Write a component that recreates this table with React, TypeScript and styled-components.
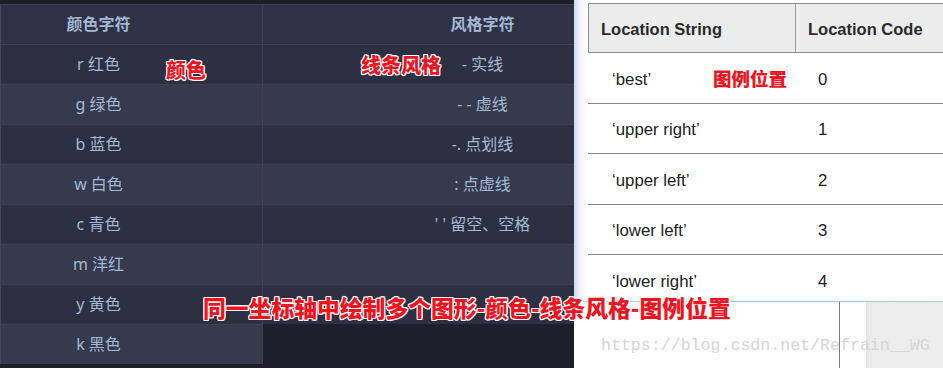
import styled, { createGlobalStyle } from 'styled-components';

const GlobalStyle = createGlobalStyle`
  body {
    margin: 0;
    background: #ffffff;
    overflow: hidden;
  }
`;

const colorRows: [string, string | null][] = [
  ['r 红色', '- 实线'],
  ['g 绿色', '- - 虚线'],
  ['b 蓝色', '-. 点划线'],
  ['w 白色', ': 点虚线'],
  ['c 青色', "' ' 留空、空格"],
  ['m 洋红', ''],
  ['y 黄色', ''],
  ['k 黑色', null],
];

const locRows = [
  ['‘best’', '0'],
  ['‘upper right’', '1'],
  ['‘upper left’', '2'],
  ['‘lower left’', '3'],
  ['‘lower right’', '4'],
];

const App = () => {
  return (
    <Page>
      <GlobalStyle />
      <DarkPanel>
        <DarkRow>
          <KeyCell $shade='head' $bold>颜色字符</KeyCell>
          <StyleCell $shade='head' $bold>风格字符</StyleCell>
        </DarkRow>
        {colorRows.map(([key, style], i) => (
          <DarkRow key={key}>
            <KeyCell $shade={i % 2 === 0 ? 'dark' : 'light'}>{key}</KeyCell>
            {style !== null && (
              <StyleCell $shade={i % 2 === 0 ? 'dark' : 'light'}>{style}</StyleCell>
            )}
          </DarkRow>
        ))}
      </DarkPanel>

      <LightSide>
        <TopArea>
          <WindowEdge />
          <LocTable>
            <LocHead>
              <LocHeadCell $first>Location String</LocHeadCell>
              <LocHeadCell>Location Code</LocHeadCell>
            </LocHead>
            {locRows.map(([name, code]) => (
              <LocRow key={name}>
                <LocCell $first>{name}</LocCell>
                <LocCell>{code}</LocCell>
              </LocRow>
            ))}
          </LocTable>
        </TopArea>
        <BottomArea>
          <BlankPane />
          <GapPane />
          <GreyPane />
        </BottomArea>
      </LightSide>

      <Note $left={166} $top={58} $size={20}>颜色</Note>
      <Note $left={361} $top={53} $size={20}>线条风格</Note>
      <Note $left={713} $top={67} $size={18.5} $plain>图例位置</Note>
      <Note $left={203} $top={294} $size={22.8}>
        同一坐标轴中绘制多个图形-颜色-线条风格-图例位置
      </Note>
      <Watermark>https://blog.csdn.net/Refrain__WG</Watermark>
    </Page>
  );
};

export default App;

const Page = styled.div`
  position: relative;
  display: flex;
  width: 943px;
  height: 368px;
  overflow: hidden;
`;

const DarkPanel = styled.div`
  width: 574px;
  height: 368px;
  padding-top: 4px;
  box-sizing: border-box;
  background: #1e1f2b;
  font-family: 'Noto Sans', 'Noto Sans CJK SC', sans-serif;
  font-size: 16px;
  color: #a3b9d2;
`;

const DarkRow = styled.div`
  display: flex;
  height: 40px;
`;

const shades: Record<string, string> = {
  head: '#2f3246',
  dark: '#2d3043',
  light: '#363a4e',
};

const DarkCell = styled.div<{ $shade: string; $bold?: boolean }>`
  display: flex;
  align-items: center;
  justify-content: center;
  box-sizing: border-box;
  height: 40px;
  padding-bottom: 3px;
  background: ${(p) => shades[p.$shade]};
  border-top: 1px solid #3d4055;
  font-weight: ${(p) => (p.$bold ? 700 : 400)};
  white-space: pre;
`;

const KeyCell = styled(DarkCell)`
  width: 263px;
  padding-right: 66px;
  border-left: 1px solid #43465a;
  border-right: 1px solid #3d4055;
`;

const StyleCell = styled(DarkCell)`
  flex: 1;
  padding-left: 128px;
`;

const LightSide = styled.div`
  display: flex;
  flex-direction: column;
  width: 369px;
  height: 368px;
  background: #ffffff;
`;

const TopArea = styled.div`
  display: flex;
  height: 301px;
  border-bottom: 1px solid #a9c9ef;
`;

const WindowEdge = styled.div`
  width: 14px;
  background: linear-gradient(to right, #c9dcf3 0, #dce8f7 3px, #f3f6fa 7px, #ffffff 100%);
`;

const LocTable = styled.div`
  flex: 1;
  padding-top: 3px;
  overflow: hidden;
  font-family: 'Liberation Sans', Arial, sans-serif;
  font-size: 16.8px;
  color: #222222;
`;

const LocHead = styled.div`
  display: flex;
  height: 50px;
  box-sizing: border-box;
  background: #ececec;
  border: 1px solid #8e8e8e;
  border-right: none;
  font-size: 16.5px;
  font-weight: 700;
  color: #2b2b2b;
`;

const LocHeadCell = styled.div<{ $first?: boolean }>`
  display: flex;
  align-items: center;
  box-sizing: border-box;
  width: ${(p) => (p.$first ? '207px' : 'auto')};
  flex: ${(p) => (p.$first ? 'none' : '1')};
  padding-left: 12px;
  padding-top: 2px;
  border-right: ${(p) => (p.$first ? '1px solid #9a9a9a' : 'none')};
`;

const LocRow = styled.div`
  display: flex;
  height: 50.5px;
  box-sizing: border-box;
  border-bottom: 1px solid #8a8a8a;
`;

const LocCell = styled.div<{ $first?: boolean }>`
  display: flex;
  align-items: center;
  box-sizing: border-box;
  width: ${(p) => (p.$first ? '207px' : 'auto')};
  padding-left: ${(p) => (p.$first ? '24px' : '23px')};
  padding-top: 4px;
`;

const BottomArea = styled.div`
  display: flex;
  flex: 1;
`;

const BlankPane = styled.div`
  width: 265px;
  border-right: 1px solid #7a7a7a;
`;

const GapPane = styled.div`
  width: 26px;
`;

const GreyPane = styled.div`
  flex: 1;
  background: linear-gradient(to right, #e2e2e2 0, #ececec 4px, #ededed 100%);
`;

const Note = styled.div<{ $left: number; $top: number; $size: number; $plain?: boolean }>`
  position: absolute;
  left: ${(p) => p.$left}px;
  top: ${(p) => p.$top}px;
  font-family: 'Noto Sans CJK SC', sans-serif;
  font-size: ${(p) => p.$size}px;
  font-weight: 900;
  line-height: 1.2;
  color: #f2131f;
  white-space: nowrap;
  text-shadow: ${(p) =>
    p.$plain
      ? 'none'
      : '1px 0 0 #fff, -1px 0 0 #fff, 0 1px 0 #fff, 0 -1px 0 #fff, 1px 1px 0 #fff, -1px -1px 0 #fff, 1px -1px 0 #fff, -1px 1px 0 #fff'};
`;

const Watermark = styled.div`
  position: absolute;
  left: 601px;
  top: 336px;
  font-family: 'Liberation Mono', monospace;
  font-size: 16.6px;
  color: #d6d6d6;
  white-space: nowrap;
`;
